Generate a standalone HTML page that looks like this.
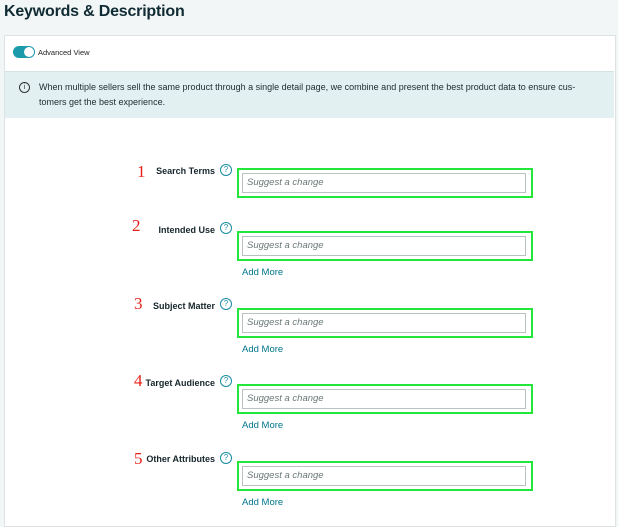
<!DOCTYPE html><html><head><style>
body{margin:0;width:618px;height:517px;overflow:hidden;background:#f3f6f6;font-family:"Liberation Sans",sans-serif;position:relative}
.a{position:absolute}
h1{position:absolute;left:4px;top:3px;margin:0;font-size:16px;font-weight:bold;color:#0f2b33;letter-spacing:-0.2px}
.panel{left:4px;top:35px;width:610px;height:490px;background:#fff;border:1px solid #dde2e2}
.info{left:5px;top:71px;width:609px;height:46px;background:#e2f0f2;border-top:1px solid #d5e2e4}
.info span{position:absolute;left:34px;top:8px;font-size:9px;line-height:15px;color:#1d2b30;white-space:nowrap}
.lbl{font-size:9px;font-weight:bold;color:#16262c;text-align:right;width:100px}
.q{width:10px;height:10px;border:1px solid #1a8ca0;border-radius:50%;font-size:8px;line-height:10px;text-align:center;color:#1a8ca0}
.num{color:#e8201a;font-size:17px;font-family:"Liberation Serif",serif}
.box{left:237px;width:292px;height:26px;border:2px solid #22e63a}
.box div{position:absolute;left:3px;top:3px;font-style:italic;font-size:9.5px;color:#6a7777;line-height:18px;padding-left:4px;box-sizing:border-box;width:284px;height:20px;border:1px solid #b8c2c2}
.add{left:242px;font-size:9.5px;color:#00758a}
</style></head><body>
<h1>Keywords &amp; Description</h1>
<div class="a panel"></div>
<div class="a" style="left:13px;top:46px;width:22px;height:12px;border-radius:6px;background:#1a9aaa"></div>
<div class="a" style="left:24px;top:47px;width:10px;height:10px;border-radius:50%;background:#fff"></div>
<div class="a" style="left:38px;top:48px;font-size:7.5px;color:#222">Advanced View</div>
<div class="a info"><div class="a" style="left:14px;top:10px;width:9px;height:9px;border:1px solid #333;border-radius:50%;font-size:7px;line-height:9px;text-align:center;color:#333">i</div><span>When multiple sellers sell the same product through a single detail page, we combine and present the best product data to ensure cus-<br>tomers get the best experience.</span></div>

<div class="a num" style="left:137px;top:162px">1</div>
<div class="a lbl" style="left:115px;top:166px">Search Terms</div>
<div class="a q" style="left:220px;top:164px">?</div>
<div class="a box" style="top:168px"><div>Suggest a change</div></div>

<div class="a num" style="left:132px;top:216px">2</div>
<div class="a lbl" style="left:115px;top:225px">Intended Use</div>
<div class="a q" style="left:220px;top:222px">?</div>
<div class="a box" style="top:231px"><div>Suggest a change</div></div>
<div class="a add" style="top:267px">Add More</div>

<div class="a num" style="left:134px;top:294px">3</div>
<div class="a lbl" style="left:115px;top:301px">Subject Matter</div>
<div class="a q" style="left:220px;top:298px">?</div>
<div class="a box" style="top:308px"><div>Suggest a change</div></div>
<div class="a add" style="top:344px">Add More</div>

<div class="a num" style="left:134px;top:371px">4</div>
<div class="a lbl" style="left:115px;top:378px">Target Audience</div>
<div class="a q" style="left:220px;top:375px">?</div>
<div class="a box" style="top:384px"><div>Suggest a change</div></div>
<div class="a add" style="top:420px">Add More</div>

<div class="a num" style="left:134px;top:449px">5</div>
<div class="a lbl" style="left:115px;top:454px">Other Attributes</div>
<div class="a q" style="left:220px;top:452px">?</div>
<div class="a box" style="top:461px"><div>Suggest a change</div></div>
<div class="a add" style="top:497px">Add More</div>
</body></html>
